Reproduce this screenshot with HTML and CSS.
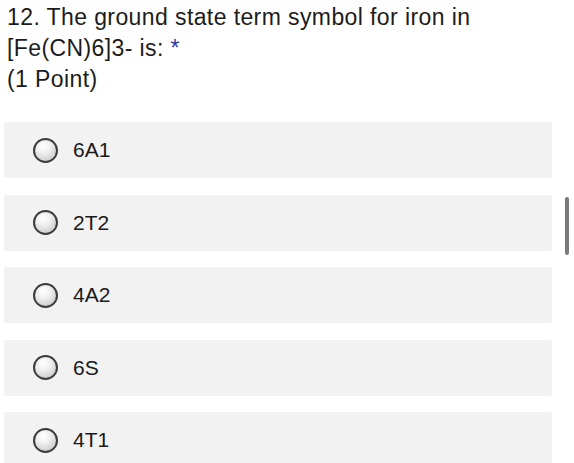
FILE: index.html
```html
<!DOCTYPE html>
<html>
<head>
<meta charset="utf-8">
<link rel="stylesheet" href="styles.css">
</head>
<body>
<div class="question">
  <div class="title">12. The ground state term symbol for iron in [Fe(CN)6]3- is:&nbsp;<span class="req">*</span></div>
  <div class="points">(1 Point)</div>
</div>
<div class="options">
  <label class="option"><span class="radio"></span><span class="label">6A1</span></label>
  <label class="option"><span class="radio"></span><span class="label">2T2</span></label>
  <label class="option"><span class="radio"></span><span class="label">4A2</span></label>
  <label class="option"><span class="radio"></span><span class="label">6S</span></label>
  <label class="option"><span class="radio"></span><span class="label">4T1</span></label>
</div>
<div class="scrollbar"></div>
</body>
</html>
```
FILE: styles.css
```css
html, body {
  margin: 0;
  padding: 0;
  overflow: hidden;
  background: #ffffff;
}
body {
  font-family: "Liberation Sans", Arial, Helvetica, sans-serif;
  color: #1c1c1c;
  position: relative;
  height: 463px;
}
.question {
  padding: 2px 0 0 7px;
  font-size: 23px;
  line-height: 31px;
  letter-spacing: 0.4px;
  width: 480px;
}
.req {
  color: #2b3a9e;
}
.options {
  margin-top: 27px;
  margin-left: 4px;
  width: 548px;
  display: flex;
  flex-direction: column;
  gap: 16.5px;
}
.option {
  height: 56px;
  background: #f2f2f2;
  border-radius: 2px;
  display: flex;
  align-items: center;
  padding-left: 29px;
  flex-shrink: 0;
}
.radio {
  width: 21px;
  height: 21px;
  border: 2px solid #3c3c3c;
  border-radius: 50%;
  background: radial-gradient(circle at 40% 30%, #ffffff 0%, #f0f0f0 35%, #bcbcbc 100%);
  flex-shrink: 0;
}
.label {
  margin-left: 15px;
  font-size: 21px;
  color: #1a1a1a;
}
.scrollbar {
  position: absolute;
  left: 565px;
  top: 197px;
  width: 4px;
  height: 58px;
  background: #7a7a7a;
  border-radius: 2px;
}
```
